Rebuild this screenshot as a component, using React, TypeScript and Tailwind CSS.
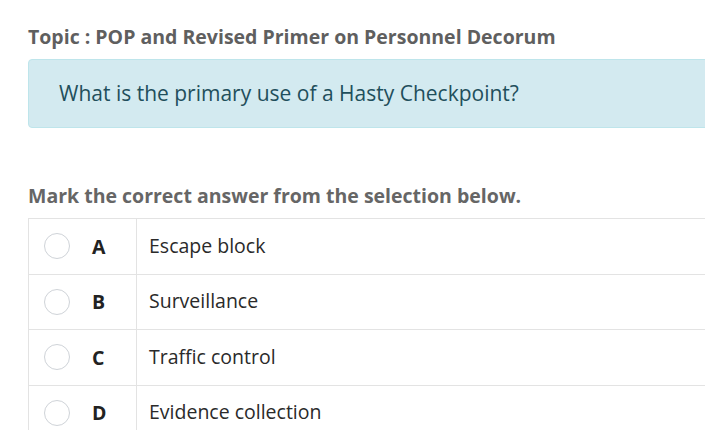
import React from "react";

const options = [
  { key: "A", text: "Escape block" },
  { key: "B", text: "Surveillance" },
  { key: "C", text: "Traffic control" },
  { key: "D", text: "Evidence collection" },
];

export default function App() {
  return (
    <div
      className="w-[705px] h-[430px] overflow-hidden bg-white"
      style={{ fontFamily: '"Open Sans", "Noto Sans", sans-serif' }}
    >
      <div className="w-[740px] pl-[28px] pt-[23px]">
        <h2 className="text-[19.5px] leading-[28px] font-bold text-[#5f5f5f]">
          Topic : POP and Revised Primer on Personnel Decorum
        </h2>
        <div className="mt-[8px] h-[69px] flex items-center rounded-[4px] border border-[#bee5eb] bg-[#d3eaf0] pl-[30px] text-[21px] text-[#1f4f5c]">
          What is the primary use of a Hasty Checkpoint?
        </div>
        <h3 className="mt-[54px] text-[19.5px] leading-[28px] font-bold text-[#666666]">
          Mark the correct answer from the selection below.
        </h3>
        <div className="mt-[8px] border-t border-l border-[#e3e3e3]">
          {options.map((o) => (
            <div key={o.key} className="flex h-[55.5px] border-b border-[#e3e3e3]">
              <div className="w-[108px] flex items-center border-r border-[#e3e3e3]">
                <span className="ml-[15px] w-[26px] h-[26px] rounded-full border border-[#cfd3d8] bg-white" />
                <span className="ml-[22px] text-[19.5px] font-bold text-[#222]">{o.key}</span>
              </div>
              <div className="flex items-center pl-[12px] pb-[2px] text-[19.5px] text-[#2a2a2a]">{o.text}</div>
            </div>
          ))}
        </div>
      </div>
    </div>
  );
}
